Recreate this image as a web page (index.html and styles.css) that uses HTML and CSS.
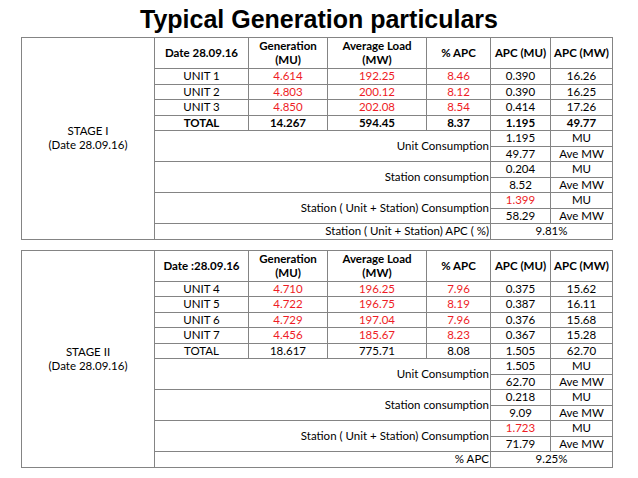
FILE: index.html
```html
<!DOCTYPE html>
<html>
<head>
<meta charset="utf-8">
<link rel="stylesheet" href="styles.css">
</head>
<body>
<h1 class="title">Typical Generation particulars</h1>

<table class="grid grid-first">
  <colgroup>
    <col class="c-stage"><col class="c-date"><col class="c-gen"><col class="c-load"><col class="c-pct"><col class="c-mu"><col class="c-mw">
  </colgroup>
  <tr class="head">
    <td rowspan="12" class="stage">STAGE I<br>(Date 28.09.16)</td>
    <td class="b">Date 28.09.16</td>
    <td class="b">Generation<br>(MU)</td>
    <td class="b">Average Load<br>(MW)</td>
    <td class="b">% APC</td>
    <td class="b">APC (MU)</td>
    <td class="b">APC (MW)</td>
  </tr>
  <tr><td>UNIT 1</td><td class="red">4.614</td><td class="red">192.25</td><td class="red">8.46</td><td>0.390</td><td>16.26</td></tr>
  <tr><td>UNIT 2</td><td class="red">4.803</td><td class="red">200.12</td><td class="red">8.12</td><td>0.390</td><td>16.25</td></tr>
  <tr><td>UNIT 3</td><td class="red">4.850</td><td class="red">202.08</td><td class="red">8.54</td><td>0.414</td><td>17.26</td></tr>
  <tr class="b"><td>TOTAL</td><td>14.267</td><td>594.45</td><td>8.37</td><td>1.195</td><td>49.77</td></tr>
  <tr><td colspan="4" rowspan="2" class="label">Unit Consumption</td><td>1.195</td><td>MU</td></tr>
  <tr><td>49.77</td><td>Ave MW</td></tr>
  <tr><td colspan="4" rowspan="2" class="label">Station consumption</td><td>0.204</td><td>MU</td></tr>
  <tr><td>8.52</td><td>Ave MW</td></tr>
  <tr><td colspan="4" rowspan="2" class="label">Station ( Unit + Station) Consumption</td><td class="red">1.399</td><td>MU</td></tr>
  <tr><td>58.29</td><td>Ave MW</td></tr>
  <tr><td colspan="4" class="label">Station ( Unit + Station) APC ( %)</td><td colspan="2">9.81%</td></tr>
</table>

<table class="grid grid-second">
  <colgroup>
    <col class="c-stage"><col class="c-date"><col class="c-gen"><col class="c-load"><col class="c-pct"><col class="c-mu"><col class="c-mw">
  </colgroup>
  <tr class="head">
    <td rowspan="13" class="stage">STAGE II<br>(Date 28.09.16)</td>
    <td class="b">Date :28.09.16</td>
    <td class="b">Generation<br>(MU)</td>
    <td class="b">Average Load<br>(MW)</td>
    <td class="b">% APC</td>
    <td class="b">APC (MU)</td>
    <td class="b">APC (MW)</td>
  </tr>
  <tr><td>UNIT 4</td><td class="red">4.710</td><td class="red">196.25</td><td class="red">7.96</td><td>0.375</td><td>15.62</td></tr>
  <tr><td>UNIT 5</td><td class="red">4.722</td><td class="red">196.75</td><td class="red">8.19</td><td>0.387</td><td>16.11</td></tr>
  <tr><td>UNIT 6</td><td class="red">4.729</td><td class="red">197.04</td><td class="red">7.96</td><td>0.376</td><td>15.68</td></tr>
  <tr><td>UNIT 7</td><td class="red">4.456</td><td class="red">185.67</td><td class="red">8.23</td><td>0.367</td><td>15.28</td></tr>
  <tr><td>TOTAL</td><td>18.617</td><td>775.71</td><td>8.08</td><td>1.505</td><td>62.70</td></tr>
  <tr><td colspan="4" rowspan="2" class="label">Unit Consumption</td><td>1.505</td><td>MU</td></tr>
  <tr><td>62.70</td><td>Ave MW</td></tr>
  <tr><td colspan="4" rowspan="2" class="label">Station consumption</td><td>0.218</td><td>MU</td></tr>
  <tr><td>9.09</td><td>Ave MW</td></tr>
  <tr><td colspan="4" rowspan="2" class="label">Station ( Unit + Station) Consumption</td><td class="red">1.723</td><td>MU</td></tr>
  <tr><td>71.79</td><td>Ave MW</td></tr>
  <tr><td colspan="4" class="label">% APC</td><td colspan="2">9.25%</td></tr>
</table>
</body>
</html>
```

FILE: styles.css
```css
html, body {
  margin: 0;
  padding: 0;
  background: #ffffff;
}

body {
  width: 638px;
  height: 478px;
  overflow: hidden;
}

.title {
  margin: 0;
  padding-top: 4px;
  height: 33px;
  font-family: "Liberation Sans", Arial, sans-serif;
  font-weight: bold;
  font-size: 25px;
  line-height: 30px;
  text-align: center;
  color: #000;
}

.grid {
  margin-left: 21px;
  width: 591px;
  table-layout: fixed;
  border-collapse: collapse;
  font-family: Lato, "Open Sans", sans-serif;
  font-size: 11.5px;
  color: #000;
}

.grid-second {
  margin-top: 10px;
}

.c-stage { width: 133px; }
.c-date { width: 94px; }
.c-gen { width: 79px; }
.c-load { width: 99px; }
.c-pct { width: 64px; }
.c-mu { width: 60px; }
.c-mw { width: 62px; }

.grid td {
  border: 1px solid #848484;
  padding: 0;
  height: 14.5px;
  line-height: 14px;
  text-align: center;
  vertical-align: middle;
  white-space: nowrap;
}

.grid tr.head td {
  height: 30px;
  line-height: 14px;
}

.grid td.stage {
  line-height: 16px;
}

.grid td.label {
  text-align: right;
  padding-right: 1px;
}

.b, .b td {
  font-weight: bold;
}

.red {
  color: #ee1c25;
}
```
